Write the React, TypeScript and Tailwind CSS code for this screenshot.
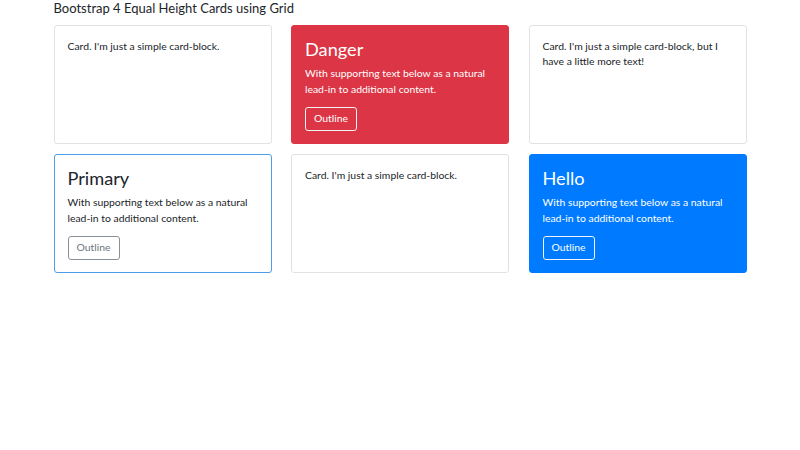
const FONT = { fontFamily: '"Segoe UI", Lato, "Noto Sans", sans-serif' };

type Variant = "plain" | "danger" | "primary" | "blue";

interface CardProps {
  variant: Variant;
  title?: string;
  text: string;
}

function Card({ variant, title, text }: CardProps) {
  const box =
    variant === "danger"
      ? "bg-[#dc3545] border-[#dc3545] text-white"
      : variant === "blue"
        ? "bg-[#007bff] border-[#007bff] text-white"
        : variant === "primary"
          ? "bg-white border-[#4a9de6] text-[#212529]"
          : "bg-white border-[#e2e2e2] text-[#212529]";

  const btn =
    variant === "primary"
      ? "border-[#8a9097] text-[#6c757d]"
      : "border-[#f3f3f3] text-white";

  return (
    <div className={`border rounded-[3px] px-[13px] pt-[12.5px] pb-[12px] ${box}`}>
      {title && <h3 className="text-[18.2px] leading-[1.2] mb-[6px]">{title}</h3>}
      <p className={`text-[10.4px] leading-[15.6px] ${title ? "mb-[9.5px]" : ""}`}>{text}</p>
      {title && (
        <button
          className={`block border rounded-[3px] px-[8px] py-[3px] text-[10.4px] leading-[15.6px] ${btn}`}
        >
          Outline
        </button>
      )}
    </div>
  );
}

const SUPPORT = "With supporting text below as a natural lead-in to additional content.";

export default function App() {
  return (
    <div className="w-[800px] h-[450px] bg-white" style={FONT}>
      <div className="w-[693px] mx-auto">
        <h5 className="text-[13px] leading-[15.6px] text-[#212529] pt-[1px] mb-[8.5px]">
          Bootstrap 4 Equal Height Cards using Grid
        </h5>
        <div className="grid grid-cols-3 gap-x-[19.5px] gap-y-[10.4px]">
          <Card variant="plain" text="Card. I'm just a simple card-block." />
          <Card variant="danger" title="Danger" text={SUPPORT} />
          <Card
            variant="plain"
            text="Card. I'm just a simple card-block, but I have a little more text!"
          />
          <Card variant="primary" title="Primary" text={SUPPORT} />
          <Card variant="plain" text="Card. I'm just a simple card-block." />
          <Card variant="blue" title="Hello" text={SUPPORT} />
        </div>
      </div>
    </div>
  );
}
